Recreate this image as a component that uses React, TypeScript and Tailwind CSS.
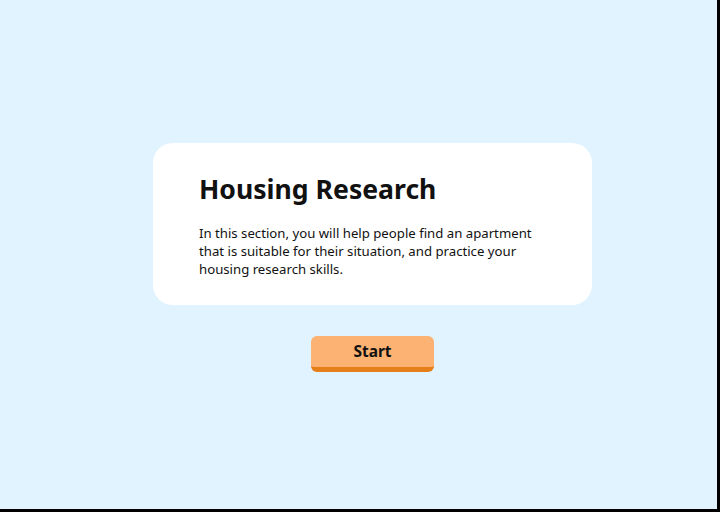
const App = () => {
  return (
    <div
      className="h-[512px] w-[720px] border-r-[3px] border-b-[3px] border-black bg-[#e0f3fe]"
      style={{ fontFamily: '"Noto Sans", "Open Sans", sans-serif' }}
    >
      <div className="flex h-full flex-col items-center justify-center pl-[28px] pt-[6px]">
        {/* intro card */}
        <div className="h-[162px] w-[439px] rounded-[20px] bg-white px-[46px] pt-[28px]">
          <h1 className="text-[26.6px] font-bold leading-[36px] text-[#111]">
            Housing Research
          </h1>
          <p className="mt-[17px] text-[13.2px] leading-[18px] text-[#111]">
            In this section, you will help people find an apartment that is suitable for their
            situation, and practice your housing research skills.
          </p>
        </div>

        <button className="mt-[31px] h-[36px] w-[123px] rounded-[6px] border-b-[5px] border-[#e67e1a] bg-[#fbb272] text-[15.5px] font-bold text-[#111]">
          Start
        </button>
      </div>
    </div>
  );
};

export default App;
